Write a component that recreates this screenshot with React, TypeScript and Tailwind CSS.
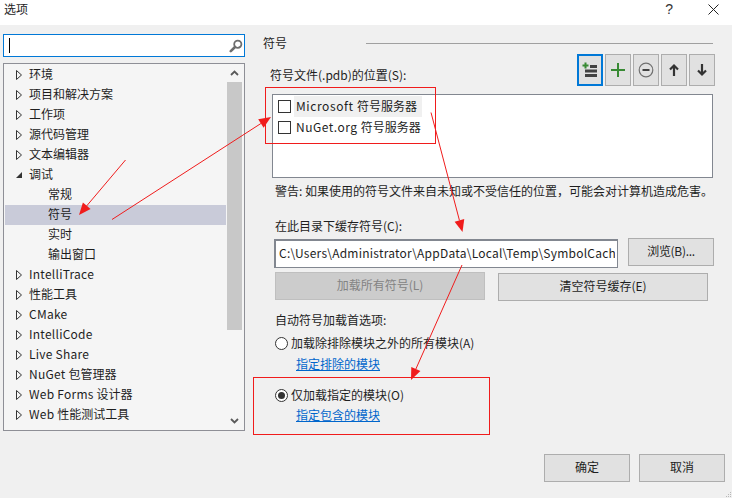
import React from "react";

const font = { fontFamily: '"Noto Sans CJK SC", "Noto Sans", sans-serif' };

type Item = { label: string; state?: "open" | "closed"; child?: boolean; selected?: boolean };

const items: Item[] = [
  { label: "环境", state: "closed" },
  { label: "项目和解决方案", state: "closed" },
  { label: "工作项", state: "closed" },
  { label: "源代码管理", state: "closed" },
  { label: "文本编辑器", state: "closed" },
  { label: "调试", state: "open" },
  { label: "常规", child: true },
  { label: "符号", child: true, selected: true },
  { label: "实时", child: true },
  { label: "输出窗口", child: true },
  { label: "IntelliTrace", state: "closed" },
  { label: "性能工具", state: "closed" },
  { label: "CMake", state: "closed" },
  { label: "IntelliCode", state: "closed" },
  { label: "Live Share", state: "closed" },
  { label: "NuGet 包管理器", state: "closed" },
  { label: "Web Forms 设计器", state: "closed" },
  { label: "Web 性能测试工具", state: "closed" },
];

function Spaced({ text }: { text: string }) {
  const runs = text.match(/[\x00-\x7f]+|[^\x00-\x7f]+/g) ?? [];
  return (
    <>
      {runs.map((run, i) =>
        /^[\x00-\x7f]/.test(run) ? (
          <span key={i} className="tracking-[0.25px]">
            {run}
          </span>
        ) : (
          <span key={i}>{run}</span>
        )
      )}
    </>
  );
}

function Caret({ state }: { state?: "open" | "closed" }) {
  if (state === "closed")
    return (
      <svg width="8" height="12" viewBox="0 0 8 12" className="shrink-0">
        <path d="M1.5 1.5 L6.5 6 L1.5 10.5 Z" fill="none" stroke="#333" strokeWidth="1" />
      </svg>
    );
  if (state === "open")
    return (
      <svg width="8" height="12" viewBox="0 0 8 12" className="shrink-0">
        <path d="M1 9 L7 9 L7 3 Z" fill="#333" />
      </svg>
    );
  return <span className="w-2 shrink-0" />;
}

function TreeRow({ item }: { item: Item }) {
  return (
    <div
      className={`h-5 flex items-center text-[12px] text-[#1e1e1e] ${
        item.child ? "pl-[43px]" : "pl-[10px]"
      } ${item.selected ? "bg-[#c9cbd9]" : ""}`}
    >
      {!item.child && <Caret state={item.state} />}
      <span className={`whitespace-nowrap leading-4 pb-[2px] ${item.child ? "" : "ml-[6px]"}`}>
        <Spaced text={item.label} />
      </span>
    </div>
  );
}

function ToolButton({ children, active }: { children: React.ReactNode; active?: boolean }) {
  return (
    <div
      className={`w-[26px] h-[32px] flex items-center justify-center box-border ${
        active ? "border-2 border-[#0078d7] bg-[#e1e1e1]" : "border border-[#adadad] bg-[#e1e1e1]"
      }`}
    >
      {children}
    </div>
  );
}

function Button({ children, className = "" }: { children: React.ReactNode; className?: string }) {
  return (
    <div
      className={`h-[28px] box-border border border-[#adadad] bg-[#e1e1e1] flex items-center justify-center pb-[2px] text-[12px] text-[#1e1e1e] ${className}`}
    >
      {children}
    </div>
  );
}

function Check() {
  return <span className="block w-[13px] h-[13px] border border-[#333] bg-white box-border shrink-0" />;
}

function Radio({ on }: { on?: boolean }) {
  return (
    <span className="mt-px w-[13px] h-[13px] rounded-full border border-[#333] bg-white box-border shrink-0 flex items-center justify-center">
      {on && <span className="block w-[7px] h-[7px] rounded-full bg-[#333]" />}
    </span>
  );
}

function Arrow({ x1, y1, x2, y2 }: { x1: number; y1: number; x2: number; y2: number }) {
  const a = Math.atan2(y2 - y1, x2 - x1);
  const len = 12;
  const w = 5;
  const bx = x2 - Math.cos(a) * len;
  const by = y2 - Math.sin(a) * len;
  const px = -Math.sin(a) * w;
  const py = Math.cos(a) * w;
  return (
    <g>
      <line x1={x1} y1={y1} x2={bx} y2={by} stroke="#f01c1c" strokeWidth="1" />
      <polygon points={`${x2},${y2} ${bx + px},${by + py} ${bx - px},${by - py}`} fill="#f01c1c" />
    </g>
  );
}

export default function App() {
  return (
    <div className="relative w-[732px] h-[498px] overflow-hidden bg-[#f0f0f0] text-[#1e1e1e]" style={font}>
      {/* Title bar */}
      <div className="h-[25px] bg-white flex items-center pl-[4px] pr-[13px] pb-[7px] text-[12px]">
        <span className="leading-[18px]">选项</span>
        <span
          className="ml-auto text-[14px] leading-none font-medium text-[#333] mr-[35px]"
          style={{ fontFamily: '"Liberation Sans", sans-serif' }}
        >
          ?
        </span>
        <svg width="11" height="11" viewBox="0 0 11 11">
          <path d="M0.5 0.5 L10.5 10.5 M10.5 0.5 L0.5 10.5" stroke="#222" strokeWidth="1" />
        </svg>
      </div>

      <div className="flex">
        {/* Left column */}
        <div className="w-[245px] pl-[3px] pt-[9px] shrink-0">
          <div className="h-[23px] box-border border border-[#0078d7] bg-white flex items-center pl-[5px] pr-px">
            <span className="block w-px h-[15px] bg-black" />
            <svg width="14" height="14" viewBox="0 0 14 14" className="ml-auto">
              <circle cx="8.8" cy="5.2" r="3.6" fill="none" stroke="#6e6e6e" strokeWidth="1.8" />
              <path d="M6 8 L1.8 12.2" stroke="#6e6e6e" strokeWidth="2.6" strokeLinecap="round" />
            </svg>
          </div>
          <div className="mt-[6px] h-[368px] box-border border border-[#8e8f96] bg-[#f5f5f5] flex pl-px pr-[2px]">
            <div className="flex-1 pt-px">
              {items.map((it) => (
                <TreeRow key={it.label} item={it} />
              ))}
            </div>
            <div className="w-[15px] ml-px flex flex-col items-center shrink-0">
              <div className="h-[18px] w-full flex items-center justify-center">
                <svg width="9" height="6" viewBox="0 0 9 6">
                  <path d="M1 5 L4.5 1.5 L8 5" fill="none" stroke="#5a5a5a" strokeWidth="1.8" />
                </svg>
              </div>
              <div className="w-full bg-[#c8c8c8] h-[248px]" />
              <div className="flex-1" />
              <div className="h-[18px] w-full flex items-center justify-center">
                <svg width="9" height="6" viewBox="0 0 9 6">
                  <path d="M1 1 L4.5 4.5 L8 1" fill="none" stroke="#5a5a5a" strokeWidth="1.8" />
                </svg>
              </div>
            </div>
          </div>
        </div>

        {/* Right column */}
        <div className="flex-1 text-[12px]">
          <div className="mt-[10px] ml-[18px] w-[450px] h-[16px] flex items-center">
            <span className="leading-4">符号</span>
            <span className="block ml-[79px] flex-1 h-px bg-[#a0a0a0]" />
          </div>

          <div className="mt-[3px] ml-[25px] w-[445px] h-[32px] flex items-end">
            <span className="leading-4 mb-[3px]">符号文件(.pdb)的位置(S):</span>
            <div className="ml-auto flex gap-[2px]">
              <ToolButton active>
                <svg width="16" height="16" viewBox="0 0 16 16">
                  <path d="M3.5 0.5 V6.5 M0.5 3.5 H6.5" stroke="#388a34" strokeWidth="2" />
                  <rect x="8" y="3" width="7" height="3" fill="#424242" />
                  <rect x="3" y="7.5" width="12" height="3" fill="#424242" />
                  <rect x="3" y="12" width="12" height="3" fill="#424242" />
                </svg>
              </ToolButton>
              <ToolButton>
                <svg width="16" height="16" viewBox="0 0 16 16">
                  <path d="M8 1 V15 M1 8 H15" stroke="#388a34" strokeWidth="2" />
                </svg>
              </ToolButton>
              <ToolButton>
                <svg width="16" height="16" viewBox="0 0 16 16">
                  <circle cx="8" cy="8" r="6.8" fill="none" stroke="#707070" strokeWidth="1.2" />
                  <path d="M4.5 8 H11.5" stroke="#424242" strokeWidth="2" />
                </svg>
              </ToolButton>
              <ToolButton>
                <svg width="12" height="14" viewBox="0 0 12 14">
                  <path d="M6 13 V2.5 M2 6.5 L6 2.5 L10 6.5" fill="none" stroke="#333" strokeWidth="2.2" />
                </svg>
              </ToolButton>
              <ToolButton>
                <svg width="12" height="14" viewBox="0 0 12 14">
                  <path d="M6 1 V11.5 M2 7.5 L6 11.5 L10 7.5" fill="none" stroke="#333" strokeWidth="2.2" />
                </svg>
              </ToolButton>
            </div>
          </div>

          <div className="mt-[8px] ml-[27px] w-[441px] h-[84px] box-border border border-[#828790] bg-white pt-px pl-[5px]">
            <div className="h-[21px] flex items-center">
              <Check />
              <span className="ml-[3px] pl-[2px] pr-[5px] h-[21px] leading-[19px] bg-[#f0f0f0] whitespace-nowrap">
                <span className="tracking-[0.6px]">Microsoft </span>符号服务器
              </span>
            </div>
            <div className="h-[21px] flex items-center">
              <Check />
              <span className="ml-[3px] pl-[2px] h-[21px] leading-[19px] whitespace-nowrap">
                <span className="tracking-[0.5px]">NuGet.org </span>符号服务器
              </span>
            </div>
          </div>

          <div className="mt-[5px] ml-[30px] h-[16px] leading-4 whitespace-nowrap">
            警告: 如果使用的符号文件来自未知或不受信任的位置，可能会对计算机造成危害。
          </div>

          <div className="mt-[19px] ml-[30px] h-[16px] leading-4">在此目录下缓存符号(C):</div>

          <div className="mt-[4px] ml-[29px] flex items-start">
            <div className="mt-px w-[344px] h-[29px] box-border border border-[#828790] border-l-2 border-t-2 bg-white pl-[3px] pr-[2px]">
              <div className="overflow-hidden leading-[23px] whitespace-nowrap tracking-[0.23px]">
                C:\Users\Administrator\AppData\Local\Temp\SymbolCache
              </div>
            </div>
            <Button className="ml-[10px] w-[86px]">
              <span className="tracking-[-0.3px]">浏览(B)...</span>
            </Button>
          </div>

          <div className="mt-[4px] ml-[30px] flex items-start">
            <Button className="w-[210px] !bg-[#cccccc] !border-[#bfbfbf] !text-[#838383]">加载所有符号(L)</Button>
            <Button className="ml-[13px] mt-px w-[210px]">清空符号缓存(E)</Button>
          </div>

          <div className="mt-[11px] ml-[30px] h-[16px] leading-4">自动符号加载首选项:</div>

          <div className="mt-[7px] ml-[30px] h-[16px] flex items-center">
            <Radio />
            <span className="ml-[3px] leading-4">加载除排除模块之外的所有模块(A)</span>
          </div>
          <div className="mt-[5px] ml-[51px] h-[16px] leading-4 text-[#0066cc] underline">指定排除的模块</div>

          <div className="mt-[15px] ml-[30px] h-[16px] flex items-center">
            <Radio on />
            <span className="ml-[3px] leading-4">仅加载指定的模块(O)</span>
          </div>
          <div className="mt-[4px] ml-[51px] h-[16px] leading-4 text-[#0066cc] underline">指定包含的模块</div>

          <div className="mt-[31px] ml-[299px] flex gap-[9px]">
            <Button className="w-[86px]">确定</Button>
            <Button className="w-[86px]">取消</Button>
          </div>
        </div>
      </div>

      {/* Annotations drawn over the dialog */}
      <div className="absolute left-[265px] top-[87px] w-[171px] h-[57px] border border-[#f01c1c]" />
      <div className="absolute left-[253px] top-[377px] w-[237px] h-[58px] border border-[#f01c1c]" />
      <svg className="absolute left-0 top-0 pointer-events-none" width="732" height="498" viewBox="0 0 732 498">
        <Arrow x1={125.5} y1={160} x2={79} y2={215} />
        <Arrow x1={112} y1={219.5} x2={271} y2={117} />
        <Arrow x1={431} y1={112.5} x2={462.5} y2={232} />
        <Arrow x1={462} y1={265} x2={411} y2={380} />
      </svg>

      {/* Resize grip */}
      <svg className="absolute right-0 bottom-0" width="6" height="6" viewBox="0 0 6 6">
        <path d="M4 0h1v1H4zM2 2h1v1H2zM4 2h1v1H4zM0 4h1v1H0zM2 4h1v1H2zM4 4h1v1H4z" fill="#b8b8b8" />
      </svg>
    </div>
  );
}
